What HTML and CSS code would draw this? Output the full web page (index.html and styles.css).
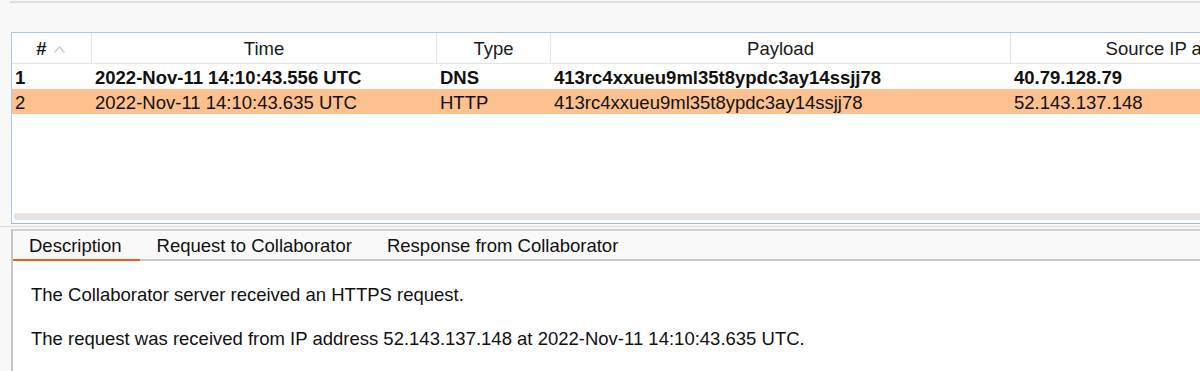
FILE: index.html
```html
<!DOCTYPE html>
<html>
<head>
<meta charset="utf-8">
<link rel="stylesheet" href="styles.css">
</head>
<body>
<div class="topline"></div>
<div class="table-panel">
  <div class="grid">
    <div class="hcell c1"><span class="hash">#</span><svg class="chev" width="11" height="7" viewBox="0 0 11 7"><polyline points="0.5,6.5 5.5,1 10.5,6.5" fill="none" stroke="#c4c4c4" stroke-width="1.2"/></svg></div>
    <div class="hcell c2">Time</div>
    <div class="hcell c3">Type</div>
    <div class="hcell c4">Payload</div>
    <div class="hcell c5">Source IP address</div>

    <div class="cell bold">1</div>
    <div class="cell bold">2022-Nov-11 14:10:43.556 UTC</div>
    <div class="cell bold">DNS</div>
    <div class="cell bold">413rc4xxueu9ml35t8ypdc3ay14ssjj78</div>
    <div class="cell bold">40.79.128.79</div>

    <div class="cell sel">2</div>
    <div class="cell sel">2022-Nov-11 14:10:43.635 UTC</div>
    <div class="cell sel">HTTP</div>
    <div class="cell sel">413rc4xxueu9ml35t8ypdc3ay14ssjj78</div>
    <div class="cell sel">52.143.137.148</div>
  </div>
  <div class="table-fill"></div>
  <div class="hscroll"></div>
</div>
<div class="sep-line"></div>
<div class="detail">
  <div class="tabs">
    <div class="tab active">Description</div>
    <div class="tab">Request to Collaborator</div>
    <div class="tab">Response from Collaborator</div>
  </div>
  <div class="content">
    <p>The Collaborator server received an HTTPS request.</p>
    <p>The request was received from IP address 52.143.137.148 at 2022-Nov-11 14:10:43.635 UTC.</p>
  </div>
</div>
</body>
</html>
```

FILE: styles.css
```css
html, body {
  margin: 0;
  padding: 0;
}
body {
  width: 1200px;
  height: 371px;
  overflow: hidden;
  background: #f8f8f8;
  font-family: "Liberation Sans", Arial, sans-serif;
  font-size: 18.5px;
  color: #111;
}
.topline {
  margin: 1px 0 0 10px;
  height: 2px;
  background: #dedede;
}
.table-panel {
  margin: 29px 0 0 11px;
  height: 190px;
  overflow: hidden;
  background: #fff;
  border-top: 1px solid #a9c8ea;
  border-left: 1px solid #a9c8ea;
  border-bottom: 1px solid #8fbbe6;
  display: flex;
  flex-direction: column;
}
.grid {
  display: grid;
  grid-template-columns: 80px 345px 114px 460px 342px;
  grid-template-rows: 31px 25px 25px;
}
.hcell {
  display: flex;
  align-items: center;
  justify-content: center;
  border-right: 1px solid #e4e4e4;
  border-bottom: 1px solid #e4e4e4;
  color: #1a1a1a;
  white-space: nowrap;
  gap: 7px;
  padding-top: 2px;
}
.hcell.c1 {
  padding-right: 2px;
}
.hash {
  font-weight: bold;
}
.chev {
  display: block;
  margin-top: 0;
}
.cell {
  display: flex;
  align-items: center;
  padding-left: 3px;
  padding-top: 3px;
  white-space: nowrap;
  color: #111;
}
.cell.bold {
  font-weight: bold;
}
.cell.sel {
  background: #fdc08f;
}
.table-fill {
  flex: 1;
}
.hscroll {
  margin: 0 0 3px 2px;
  height: 7px;
  border-radius: 4px 0 0 4px;
  background: #e4e4e4;
}
.sep-line {
  margin: 2px 0 0 0;
  height: 1px;
  background: #dcdcdc;
}
.detail {
  margin: 2px 0 0 11px;
  border-left: 2px solid #c6c6c6;
  background: #fff;
  height: 143px;
  overflow: hidden;
}
.tabs {
  display: flex;
  height: 28px;
  background: #f9f9f9;
  border-top: 2px solid #d2d2d2;
  border-bottom: 2px solid #c8c8c8;
}
.tab {
  padding: 2px 18px 0 17px;
  display: flex;
  align-items: center;
  color: #111;
  white-space: nowrap;
  border-bottom: 2px solid transparent;
  margin-bottom: -2px;
}
.tab.active {
  border-bottom-color: #f05a1e;
  padding-left: 16px;
}
.content {
  padding: 23px 18px;
}
.content p {
  margin: 0 0 22px 0;
  line-height: 22px;
  color: #111;
}
```
